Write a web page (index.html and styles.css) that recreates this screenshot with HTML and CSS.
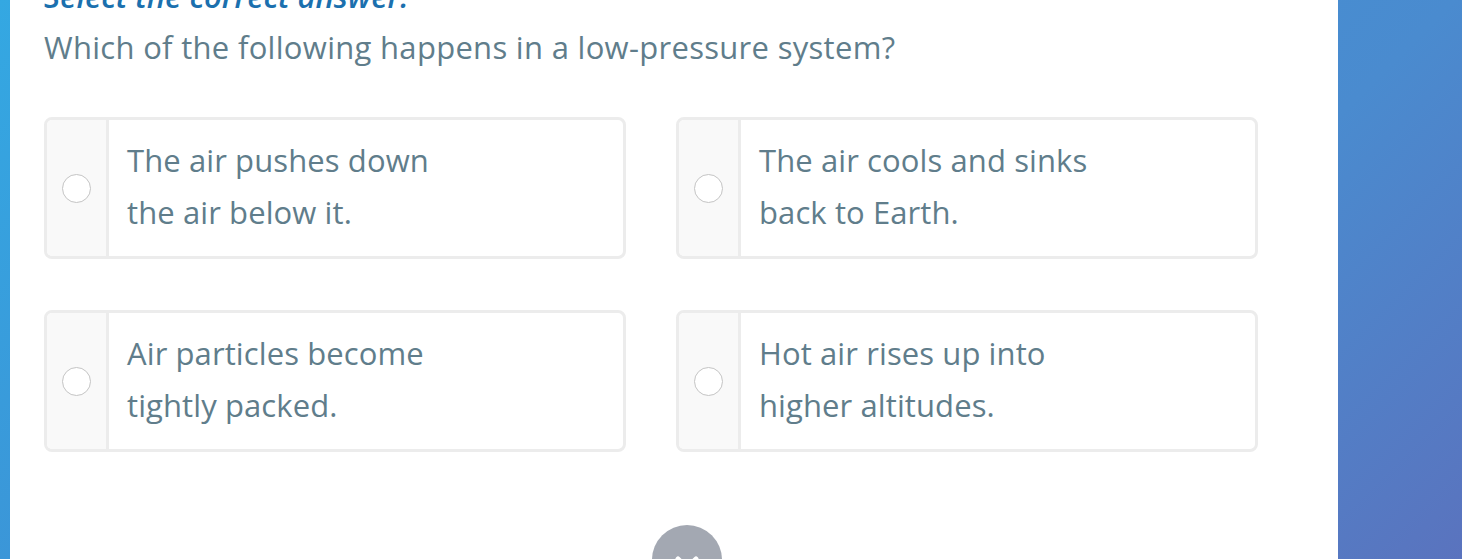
FILE: index.html
```html
<!DOCTYPE html>
<html lang="en">
<head>
    <meta charset="UTF-8">
    <meta name="viewport" content="width=device-width, initial-scale=1.0">
    <title>Question</title>
    <link rel="stylesheet" href="styles.css">
</head>
<body>
    <div class="sheet">
        <p class="prompt">Select the correct answer.</p>
        <p class="question">Which of the following happens in a low-pressure system?</p>

        <div class="options">
            <label class="option">
                <span class="mark"><span class="radio"></span></span>
                <span class="answer">The air pushes down<br>the air below it.</span>
            </label>
            <label class="option">
                <span class="mark"><span class="radio"></span></span>
                <span class="answer">The air cools and sinks<br>back to Earth.</span>
            </label>
            <label class="option">
                <span class="mark"><span class="radio"></span></span>
                <span class="answer">Air particles become<br>tightly packed.</span>
            </label>
            <label class="option">
                <span class="mark"><span class="radio"></span></span>
                <span class="answer">Hot air rises up into<br>higher altitudes.</span>
            </label>
        </div>

        <div class="more" aria-label="More">
            <svg width="28" height="18" viewBox="0 0 28 18">
                <path d="M5 4 L14 13 L23 4" fill="none" stroke="#fff" stroke-width="5" stroke-linecap="round" stroke-linejoin="round"/>
            </svg>
        </div>
    </div>
</body>
</html>
```

FILE: styles.css
```css
* {
    box-sizing: border-box;
    margin: 0;
    padding: 0;
}
html, body {
    height: 100%;
    overflow: hidden;
}
body {
    font-family: 'Open Sans', 'Noto Sans', Arial, sans-serif;
    background: linear-gradient(135deg, #34a8e2 0%, #3b96d8 28%, #4a8bcf 72%, #5a73be 100%);
    color: #607d8b;
}
.sheet {
    margin-left: 10px;
    width: 1328px;
    min-height: 100%;
    background-color: #fff;
    padding: 0 34px;
}
.prompt {
    margin-top: -24px;
    font-size: 31px;
    line-height: 40px;
    font-style: italic;
    font-weight: 600;
    color: #1b70ae;
}
.question {
    margin-top: 11px;
    font-size: 31px;
    line-height: 40px;
    letter-spacing: 0.3px;
}
.options {
    display: grid;
    grid-template-columns: 582px 582px;
    column-gap: 50px;
    row-gap: 51px;
    margin-top: 50px;
}
.option {
    display: flex;
    height: 142px;
    border: 3px solid #ececec;
    border-radius: 8px;
    overflow: hidden;
    cursor: pointer;
}
.mark {
    flex: 0 0 62px;
    display: flex;
    align-items: center;
    justify-content: center;
    background-color: #f9f9f9;
    border-right: 3px solid #ececec;
}
.radio {
    width: 29px;
    height: 29px;
    border: 1px solid #c4c4c4;
    border-radius: 50%;
    background-color: #fff;
}
.answer {
    display: flex;
    align-items: center;
    padding: 0 0 4px 18px;
    font-size: 31px;
    line-height: 52px;
    letter-spacing: 0.1px;
}
.more {
    display: flex;
    justify-content: center;
    align-items: flex-start;
    width: 70px;
    height: 70px;
    margin: 73px 0 0 608px;
    border-radius: 50%;
    background-color: #a3a8b2;
    padding-top: 30px;
    cursor: pointer;
}
```
